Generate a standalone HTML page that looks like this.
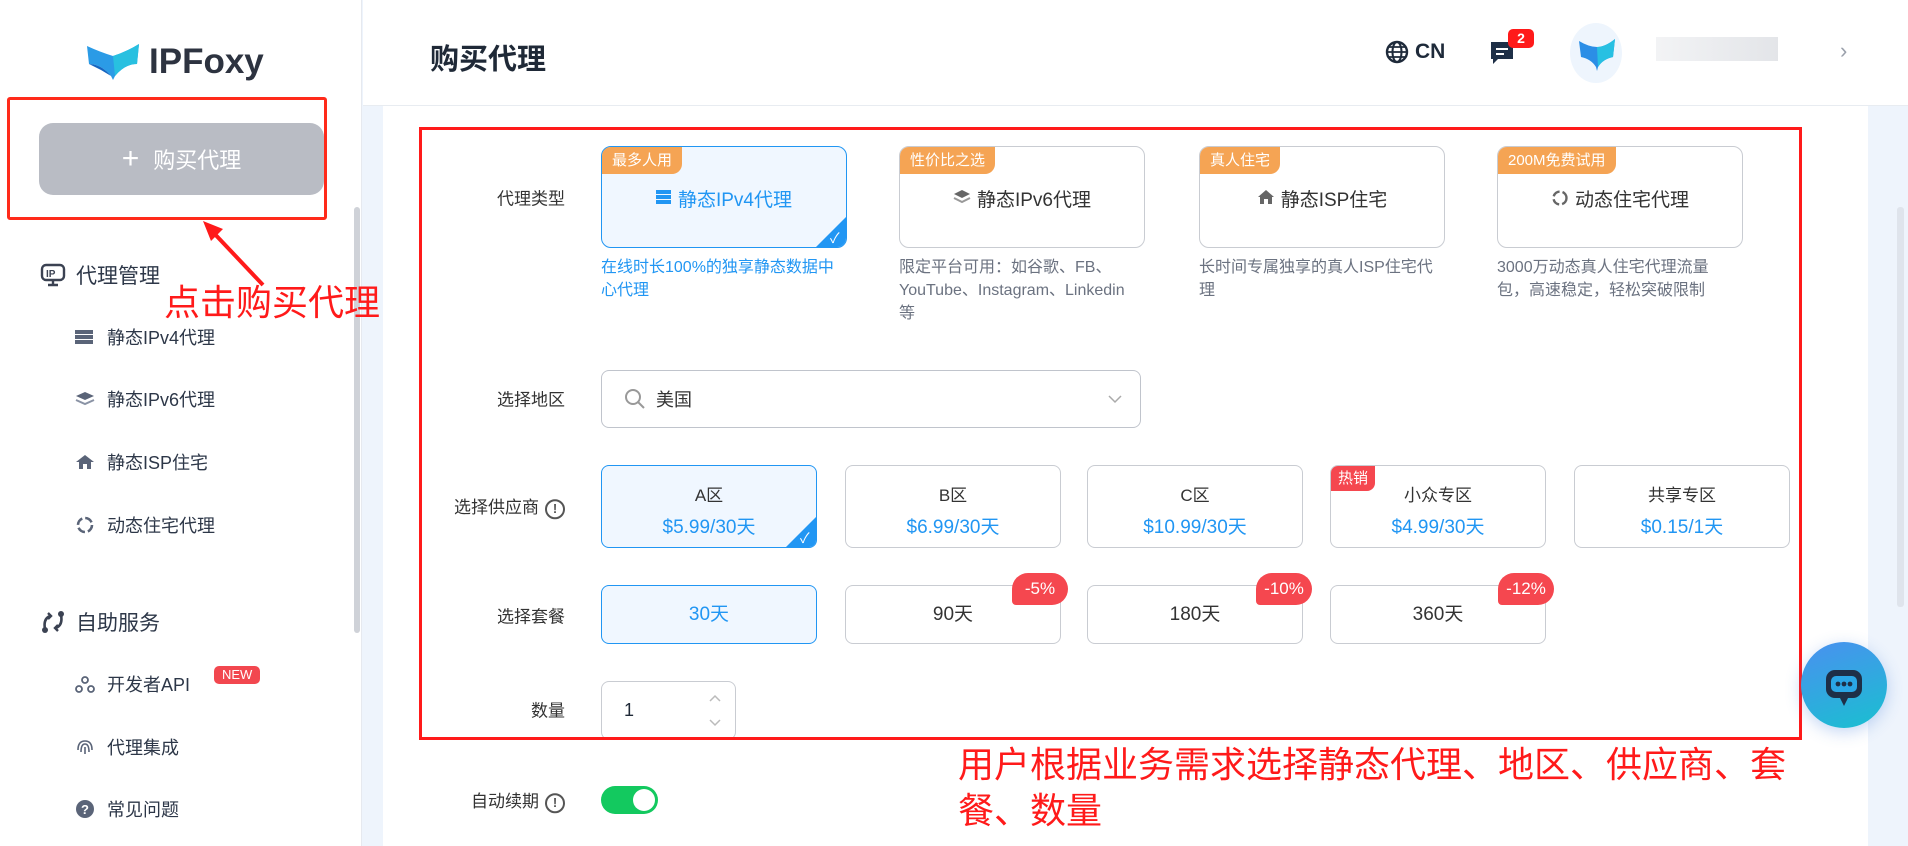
<!DOCTYPE html>
<html><head><meta charset="utf-8"><style>
*{box-sizing:border-box;margin:0;padding:0}
body{width:1908px;height:846px;overflow:hidden;background:#eef4fc;font-family:"Liberation Sans","Noto Sans CJK SC",sans-serif;color:#1f2937;position:relative}
.abs{position:absolute}
.side{left:0;top:0;width:362px;height:846px;background:#fff;border-right:1px solid #e6e9ef}
.mi{position:absolute;left:40px;font-size:19px;color:#2d3748;display:flex;align-items:center;gap:10px}
.si{position:absolute;left:75px;font-size:18px;color:#2d3748;display:flex;align-items:center;gap:10px}
.hdr{left:363px;top:0;width:1545px;height:106px;background:#fff;border-bottom:1px solid #e8ecf1}
.card{left:383px;top:106px;width:1485px;height:740px;background:#fff}
.lbl{position:absolute;right:1343px;font-size:17px;color:#333;transform:translateY(-50%);white-space:nowrap}
.tc{position:absolute;width:246px;height:102px;border:1px solid #c9ccd2;border-radius:10px;top:146px;font-size:19px;color:#333;display:flex;justify-content:center;align-items:flex-start;padding-top:38px;gap:6px;overflow:hidden}
.tc svg{margin-top:4px}
.tc.sel{border-color:#2196f3;background:#f0f7ff;color:#2196f3}
.tag{position:absolute;left:0;top:0;height:27px;padding:0 10px;background:#f5a454;color:#fff;font-size:15px;line-height:27px;border-bottom-right-radius:10px}
.desc{position:absolute;top:256px;width:240px;font-size:16px;line-height:23px;color:#6b7280}
.sc{position:absolute;top:465px;width:216px;height:83px;border:1px solid #c9ccd2;border-radius:8px;text-align:center;font-size:17px;color:#333;padding-top:15px;overflow:hidden}
.sc b{display:block;font-weight:normal;color:#2196f3;font-size:19px;margin-top:6px}
.sc.sel,.pc.sel{border-color:#2196f3;background:#f0f7ff}
.pc{position:absolute;top:585px;width:216px;height:59px;border:1px solid #c9ccd2;border-radius:8px;text-align:center;font-size:19px;line-height:57px;color:#333}
.bdg{position:absolute;top:573px;width:56px;height:32px;background:#f5474f;color:#fff;font-size:17px;line-height:32px;text-align:center;border-radius:16px 16px 16px 4px}
.corner{position:absolute;right:-1px;bottom:-1px;width:0;height:0;border-left:32px solid transparent;border-bottom:32px solid #2196f3}
.corner:after{content:"✓";position:absolute;left:-17px;top:12px;color:#fff;font-size:14px}
.red{color:#ff1a1a}
.excl{display:inline-block;width:20px;height:20px;border:2px solid #555;border-radius:50%;font-size:13px;line-height:16px;text-align:center;font-weight:bold;color:#555;vertical-align:middle;margin-left:6px}
</style></head><body>
<div class="abs side"></div>
<div class="abs" style="left:85px;top:42px;display:flex;align-items:center;gap:8px">
<svg width="56" height="40" viewBox="0 0 56 40"><path d="M2 4 Q15 10 28 14 Q41 10 54 2 L52 22 Q40 22 30 34 L28 38 L26 34 Q16 22 4 22Z" fill="#2b9be6"/><path d="M28 14 Q41 10 54 2 L52 22 Q40 22 30 34Z" fill="#28c0e0"/><path d="M4 22 Q16 22 26 34 L16 28Z" fill="#1565c0"/></svg>
<span style="font-size:35px;font-weight:bold;color:#2d3340">IPFoxy</span></div>
<div class="abs" style="left:39px;top:123px;width:285px;height:72px;border-radius:14px;background:#b9bcc4;color:#fff;font-size:22px;display:flex;align-items:center;justify-content:center;gap:14px"><span style="font-size:30px;font-weight:300">+</span>购买代理</div>
<div class="abs" style="left:7px;top:97px;width:320px;height:123px;border:3px solid #ff2a1a;border-radius:3px"></div>
<div class="mi" style="top:260px"><svg width="26" height="24" viewBox="0 0 26 24"><rect x="2" y="2" width="22" height="15" rx="4" fill="none" stroke="#3b4252" stroke-width="2.4"/><text x="6" y="14" font-size="10" font-weight="bold" fill="#3b4252" font-family="Liberation Sans">IP</text><path d="M13 17v4M8 22h10" stroke="#3b4252" stroke-width="2.4"/></svg><span style="font-size:21px">代理管理</span></div>
<div class="si" style="top:324px"><svg width="20" height="16"><rect y="1" width="18" height="4" fill="#5a6478"/><rect y="6" width="18" height="4" fill="#5a6478"/><rect y="11" width="18" height="4" fill="#5a6478"/></svg><span style="margin-left:2px">静态IPv4代理</span></div>
<div class="si" style="top:386px"><svg width="20" height="16"><path d="M1 5 L10 1 L19 5 L10 9Z" fill="#5a6478"/><path d="M1 9 L10 13 L19 9" stroke="#8a93a5" fill="none" stroke-width="2"/></svg><span style="margin-left:2px">静态IPv6代理</span></div>
<div class="si" style="top:449px"><svg width="20" height="16"><path d="M1 8 L10 1 L19 8 L16 8 L16 15 L4 15 L4 8Z" fill="#5a6478"/><rect x="8" y="10" width="4" height="5" fill="#fff"/></svg><span style="margin-left:2px">静态ISP住宅</span></div>
<div class="si" style="top:512px"><svg width="20" height="18"><circle cx="10" cy="9" r="7" fill="none" stroke="#5a6478" stroke-width="2.6" stroke-dasharray="8 3"/></svg><span style="margin-left:2px">动态住宅代理</span></div>
<div class="mi" style="top:607px"><svg width="26" height="26" viewBox="0 0 26 26"><path d="M5 20 Q3 10 10 7 M21 6 Q23 16 16 19" stroke="#3b4252" stroke-width="2.6" fill="none"/><circle cx="5" cy="21" r="3" fill="#3b4252"/><circle cx="21" cy="5" r="3" fill="#3b4252"/><path d="M8 4l3 3-3 3M18 16l-3 3 3 3" stroke="#3b4252" stroke-width="2.4" fill="none"/></svg><span style="font-size:21px">自助服务</span></div>
<div class="si" style="top:671px"><svg width="20" height="18"><circle cx="10" cy="5" r="3" fill="none" stroke="#5a6478" stroke-width="1.8"/><circle cx="4" cy="14" r="3" fill="none" stroke="#5a6478" stroke-width="1.8"/><circle cx="16" cy="14" r="3" fill="none" stroke="#5a6478" stroke-width="1.8"/></svg><span style="margin-left:2px">开发者API</span></div>
<div class="abs" style="left:214px;top:666px;height:18px;padding:0 8px;background:#f2474f;color:#fff;font-size:13px;line-height:18px;border-radius:5px">NEW</div>
<div class="si" style="top:734px"><svg width="20" height="18"><path d="M3 12 Q3 3 10 3 Q17 3 17 12 M6 14 Q6 6 10 6 Q14 6 14 14 M10 9v7" stroke="#5a6478" stroke-width="1.6" fill="none"/></svg><span style="margin-left:2px">代理集成</span></div>
<div class="si" style="top:796px"><svg width="20" height="20"><circle cx="10" cy="10" r="9" fill="#5a6478"/><text x="6" y="15" font-size="13" font-weight="bold" fill="#fff" font-family="Liberation Sans">?</text></svg><span style="margin-left:2px">常见问题</span></div>
<div class="abs" style="left:354px;top:207px;width:6px;height:426px;border-radius:3px;background:#cfd2d8"></div>
<div class="abs red" style="left:164px;top:274px;font-size:36px">点击购买代理</div>
<svg class="abs" style="left:195px;top:215px" width="80" height="80"><path d="M68 70 L15 14" stroke="#ff1a1a" stroke-width="4"/><path d="M8 6 L28 14 L16 26Z" fill="#ff1a1a"/></svg>

<div class="abs hdr"></div>
<div class="abs" style="left:430px;top:36px;font-size:29px;font-weight:bold;color:#1f2937">购买代理</div>
<div class="abs" style="left:1385px;top:40px;display:flex;align-items:center;gap:6px;font-weight:bold;font-size:21px;color:#1e2a3a"><svg width="24" height="24"><circle cx="12" cy="12" r="10" fill="none" stroke="#1e2a3a" stroke-width="2.4"/><ellipse cx="12" cy="12" rx="4.5" ry="10" fill="none" stroke="#1e2a3a" stroke-width="2"/><path d="M2 12h20M4 7h16M4 17h16" stroke="#1e2a3a" stroke-width="1.8"/></svg>CN</div>
<svg class="abs" style="left:1489px;top:40px" width="28" height="26"><path d="M2 2h22v17H9l-5 5v-5H2Z" fill="#1e2f47"/><path d="M7 9h12M7 14h8" stroke="#fff" stroke-width="2"/></svg>
<div class="abs" style="left:1508px;top:29px;width:26px;height:19px;background:#ff1a1a;color:#fff;font-size:14px;font-weight:bold;text-align:center;line-height:19px;border-radius:5px">2</div>
<div class="abs" style="left:1570px;top:23px;width:52px;height:60px;border-radius:50%;background:#eef5fd"></div>
<svg class="abs" style="left:1577px;top:35px" width="40" height="40" viewBox="0 0 40 40"><path d="M2 6 Q12 12 20 12 Q28 12 38 4 L36 22 Q26 24 21 32 L20 36 L19 32 Q14 24 4 22Z" fill="#2b8ee6"/><path d="M20 12 Q28 12 38 4 L36 22 Q26 24 21 32Z" fill="#27c0e2"/></svg>
<div class="abs" style="left:1656px;top:37px;width:122px;height:24px;background:linear-gradient(90deg,#f1f2f4,#e0e2e6);opacity:.9"></div>
<div class="abs" style="left:1840px;top:38px;font-size:22px;color:#9aa0ab">›</div>

<div class="abs card"></div>
<div class="abs" style="left:1897px;top:207px;width:7px;height:400px;border-radius:3px;background:#dfe4ec"></div>

<div class="lbl" style="top:197px">代理类型</div>
<div class="tc sel" style="left:601px"><div class="tag">最多人用</div><svg width="16" height="16"><rect y="1" width="15" height="4" fill="#2196f3"/><rect y="6" width="15" height="4" fill="#2196f3"/><rect y="11" width="15" height="4" fill="#2196f3"/></svg>静态IPv4代理<div class="corner"></div></div>
<div class="tc" style="left:899px"><div class="tag">性价比之选</div><svg width="18" height="16"><path d="M1 5 L9 1 L17 5 L9 9Z" fill="#666"/><path d="M1 9 L9 13 L17 9" stroke="#999" fill="none" stroke-width="2"/></svg>静态IPv6代理</div>
<div class="tc" style="left:1199px"><div class="tag">真人住宅</div><svg width="18" height="16"><path d="M1 8 L9 1 L17 8 L15 8 L15 15 L3 15 L3 8Z" fill="#666"/><rect x="7" y="10" width="4" height="5" fill="#fff"/></svg>静态ISP住宅</div>
<div class="tc" style="left:1497px"><div class="tag">200M免费试用</div><svg width="18" height="18"><circle cx="9" cy="9" r="6.5" fill="none" stroke="#666" stroke-width="2.4" stroke-dasharray="8 3"/></svg>动态住宅代理</div>
<div class="desc" style="left:601px;color:#2196f3">在线时长100%的独享静态数据中心代理</div>
<div class="desc" style="left:899px">限定平台可用：如谷歌、FB、YouTube、Instagram、Linkedin等</div>
<div class="desc" style="left:1199px">长时间专属独享的真人ISP住宅代理</div>
<div class="desc" style="left:1497px">3000万动态真人住宅代理流量包，高速稳定，轻松突破限制</div>

<div class="lbl" style="top:398px">选择地区</div>
<div class="abs" style="left:601px;top:370px;width:540px;height:58px;border:1px solid #c0c4cc;border-radius:8px;display:flex;align-items:center;padding-left:22px;gap:10px;font-size:18px;color:#333"><svg width="22" height="22"><circle cx="9" cy="9" r="7" fill="none" stroke="#999" stroke-width="2"/><path d="M14 14l6 6" stroke="#999" stroke-width="2"/></svg>美国<svg style="position:absolute;right:18px;top:24px" width="14" height="9"><path d="M1 1l6 6 6-6" stroke="#aaa" stroke-width="1.5" fill="none"/></svg></div>

<div class="lbl" style="top:506px">选择供应商<span class="excl">!</span></div>
<div class="sc sel" style="left:601px">A区<b>$5.99/30天</b><div class="corner"></div></div>
<div class="sc" style="left:845px">B区<b>$6.99/30天</b></div>
<div class="sc" style="left:1087px">C区<b>$10.99/30天</b></div>
<div class="sc" style="left:1330px"><div style="position:absolute;left:0;top:0;width:44px;height:25px;background:#f5474f;color:#fff;font-size:15px;line-height:25px;border-bottom-right-radius:8px">热销</div>小众专区<b>$4.99/30天</b></div>
<div class="sc" style="left:1574px">共享专区<b>$0.15/1天</b></div>

<div class="lbl" style="top:615px">选择套餐</div>
<div class="pc sel" style="left:601px;color:#2196f3">30天</div>
<div class="pc" style="left:845px">90天</div>
<div class="pc" style="left:1087px">180天</div>
<div class="pc" style="left:1330px">360天</div>
<div class="bdg" style="left:1012px">-5%</div>
<div class="bdg" style="left:1256px">-10%</div>
<div class="bdg" style="left:1498px">-12%</div>

<div class="lbl" style="top:709px">数量</div>
<div class="abs" style="left:601px;top:681px;width:135px;height:59px;border:1px solid #c9ccd2;border-radius:8px;font-size:18px;line-height:57px;padding-left:22px">1<svg style="position:absolute;right:14px;top:12px" width="12" height="34"><path d="M1 7l5-5 5 5M1 26l5 5 5-5" stroke="#bbb" stroke-width="1.5" fill="none"/></svg></div>

<div class="abs" style="left:419px;top:127px;width:1383px;height:613px;border:3px solid #ff1a1a"></div>

<div class="lbl" style="top:800px">自动续期<span class="excl">!</span></div>
<div class="abs" style="left:601px;top:786px;width:57px;height:28px;border-radius:14px;background:#13c95f"><div style="position:absolute;right:3px;top:3px;width:22px;height:22px;border-radius:50%;background:#fff"></div></div>

<div class="abs red" style="left:958px;top:742px;width:880px;font-size:36px;line-height:46px">用户根据业务需求选择静态代理、地区、供应商、套餐、数量</div>

<div class="abs" style="left:1801px;top:642px;width:86px;height:86px;border-radius:50%;background:linear-gradient(160deg,#4a90f0,#19c0d0);box-shadow:0 4px 16px rgba(60,120,220,.3)"></div>
<svg class="abs" style="left:1822px;top:664px" width="44" height="44"><rect x="4" y="6" width="36" height="28" rx="9" fill="#1e2f47"/><path d="M18 34 L22 42 L26 34Z" fill="#1e2f47"/><rect x="9" y="12" width="26" height="16" rx="5" fill="#2aa6e6"/><circle cx="16" cy="20" r="2.4" fill="#1e2f47"/><circle cx="22" cy="20" r="2.4" fill="#1e2f47"/><circle cx="28" cy="20" r="2.4" fill="#1e2f47"/></svg>
</body></html>
